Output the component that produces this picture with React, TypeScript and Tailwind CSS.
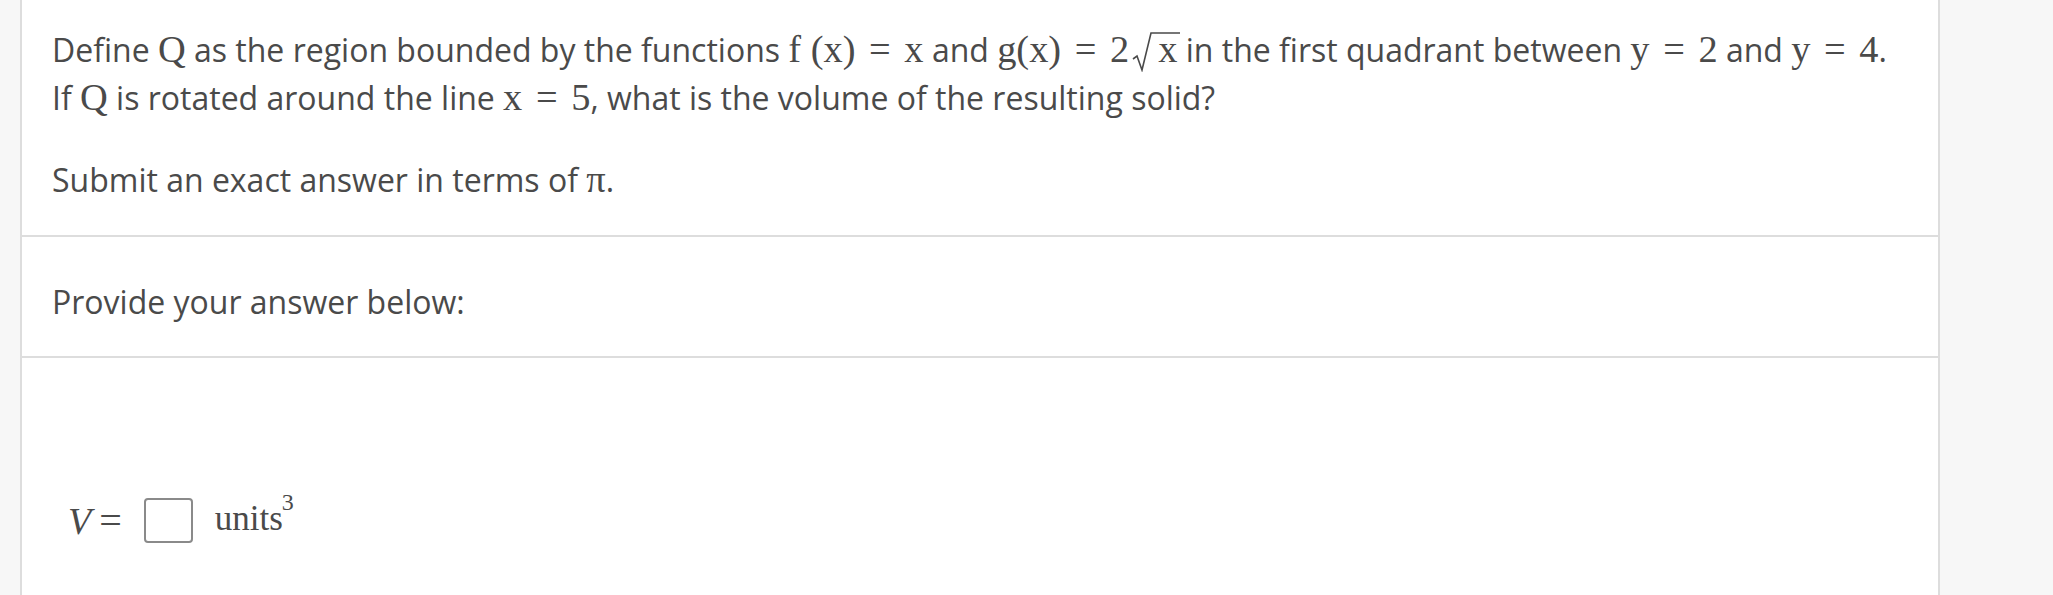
const sans = "font-['Open_Sans',_'Liberation_Sans',_sans-serif]";

function M({ children }: { children: React.ReactNode }) {
  return (
    <span className="font-['Liberation_Serif',_serif] text-[1.2em] leading-none">
      {children}
    </span>
  );
}

// relation sign with TeX-like thick spacing
function Eq() {
  return <span className="mx-[4px]"> = </span>;
}

// radical sign drawn as svg, the x stays real text
function Sqrt({ children }: { children: React.ReactNode }) {
  return (
    <span className="relative inline-block leading-none pl-[26px] ml-[3px]">
      <svg
        className="absolute left-0 top-[2px]"
        width="48"
        height="40"
        viewBox="0 0 48 40"
        fill="none"
        stroke="#4a4a4a"
        strokeWidth="1.6"
      >
        <path d="M1 27 L5 24 L10 38 L19 1 L48 1" />
      </svg>
      {children}
    </span>
  );
}

export default function App() {
  return (
    <div className={`min-h-[595px] bg-[#f7f7f7] flex ${sans}`}>
      <div className="ml-[20px] w-[1920px] bg-white border-x-2 border-[#dddddd] text-[#4a4a4a] text-[32px] leading-[48px]">
        <div className="h-[235px] pl-[30px] pr-6 pt-[26px]">
          <p>
            Define <M>Q</M> as the region bounded by the functions{" "}
            <M>f (x)<Eq />x</M> and <M>g(x)<Eq />2<Sqrt>x</Sqrt></M> in the first quadrant between{" "}
            <M>y<Eq />2</M> and <M>y<Eq />4</M>.
          </p>
          <p>
            If <M>Q</M> is rotated around the line <M>x<Eq />5</M>, what is the volume of the resulting solid?
          </p>
          <p className="mt-[34px]">
            Submit an exact answer in terms of <M>π</M>.
          </p>
        </div>
        <div className="h-[121px] border-t-2 border-[#dddddd] pl-[30px] pt-[41px]">
          <p>Provide your answer below:</p>
        </div>
        <div className="h-[239px] border-t-2 border-[#dddddd] pl-[46px] pt-[137px]">
          <div className="flex items-center gap-[22px] font-['Liberation_Serif',_serif] text-[38px]">
            <span className="flex items-center gap-[8px]">
              <span className="italic">V</span>
              <span className="text-[40px]">=</span>
            </span>
            <span className="w-[49px] h-[45px] border-2 border-[#8a8a8a] rounded-[4px]" />
            <span className="text-[35px]">
              units<span className="relative -top-[20px] text-[24px] -ml-[1px]">3</span>
            </span>
          </div>
        </div>
      </div>
    </div>
  );
}
